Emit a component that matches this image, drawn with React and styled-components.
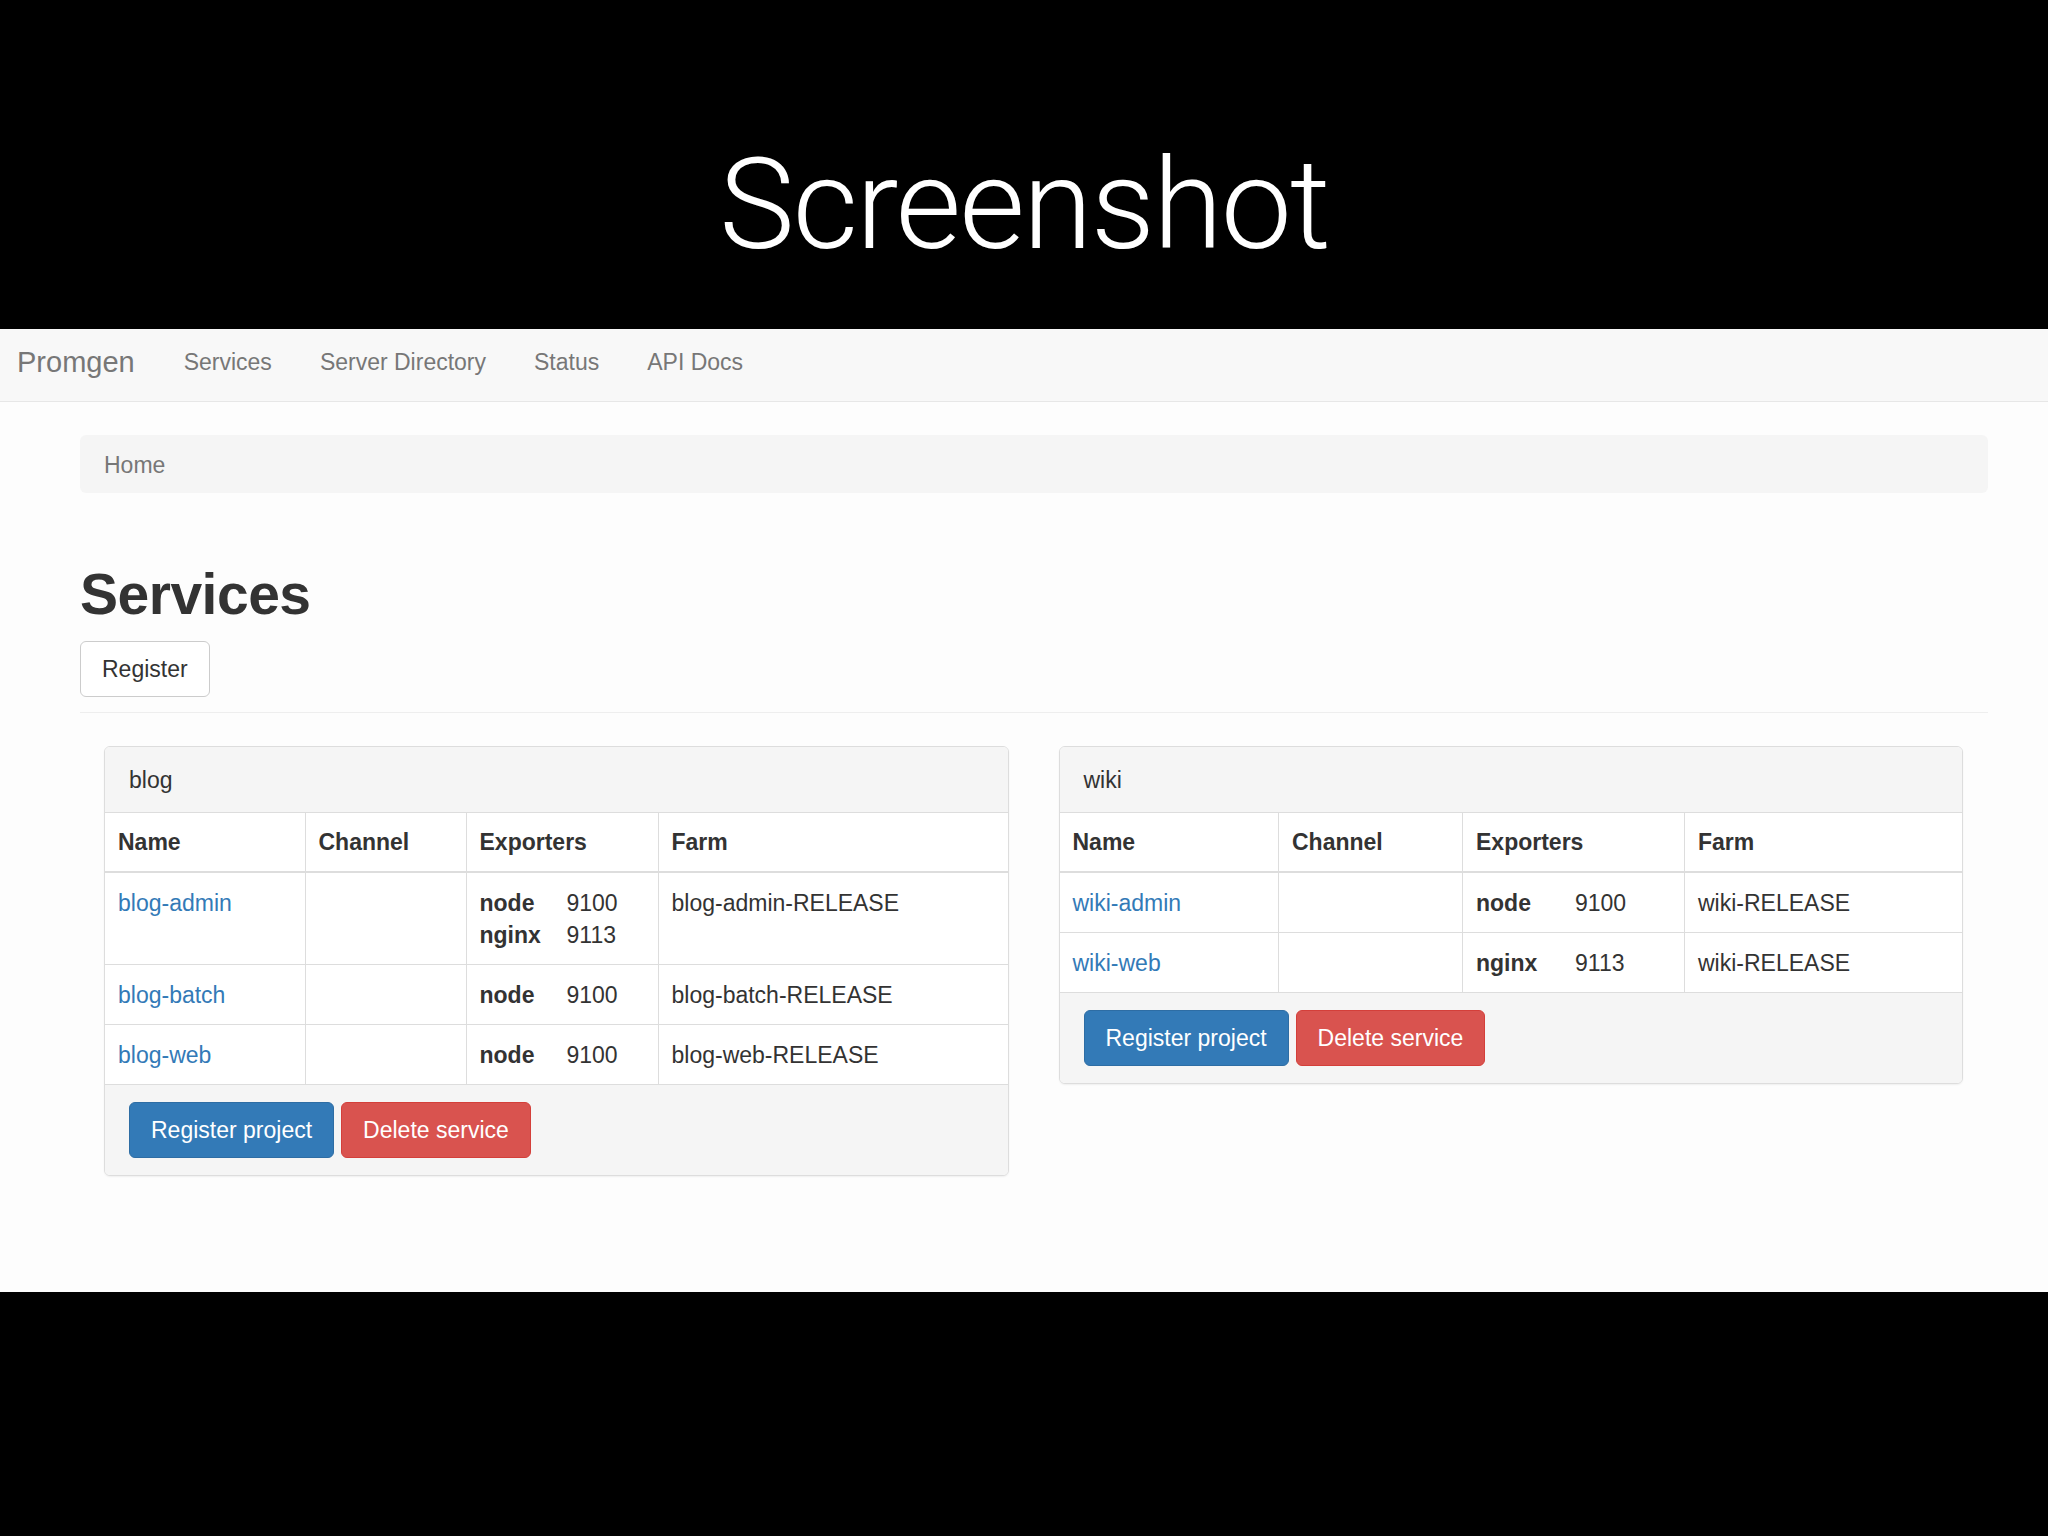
import styled, { createGlobalStyle } from 'styled-components';

const GlobalStyle = createGlobalStyle`
  html, body {
    margin: 0;
    padding: 0;
    background: #000;
  }
  * {
    box-sizing: border-box;
  }
`;

const Slide = styled.div`
  width: 2048px;
  height: 1536px;
  background: #000;
  display: flex;
  flex-direction: column;
  font-family: "Liberation Sans", Arial, sans-serif;
`;

const TitleBar = styled.div`
  height: 329px;
  padding-top: 141px;
  text-align: center;
`;

const Title = styled.h1`
  margin: 0;
  font-family: Roboto, "Liberation Sans", sans-serif;
  font-weight: 300;
  font-size: 127px;
  line-height: 1;
  color: #fff;
  letter-spacing: -2px;
`;

const Screen = styled.div`
  height: 963px;
  background: #fdfdfd;
  overflow: hidden;
  color: #333;
  font-size: 23px;
  line-height: 32px;
`;

const Navbar = styled.nav`
  height: 73px;
  background: #f8f8f8;
  border-bottom: 1px solid #e7e7e7;
  display: flex;
  align-items: center;
  gap: 48px;
  padding: 0 0 6px 17px;
`;

const Brand = styled.a`
  font-size: 29px;
  color: #777;
  margin-right: 1px;
`;

const NavLink = styled.a`
  color: #777;
  font-size: 23px;
`;

const Container = styled.div`
  padding: 0 60px 0 80px;
`;

const Breadcrumb = styled.div`
  margin-top: 33px;
  height: 58px;
  padding: 2px 24px 0;
  background: #f5f5f5;
  border-radius: 6px;
  display: flex;
  align-items: center;
  color: #777;
`;

const PageHeader = styled.div`
  margin-top: 70px;
  padding-bottom: 15px;
  border-bottom: 1px solid #eee;
`;

const Heading = styled.h1`
  margin: 0 0 15px;
  font-size: 57px;
  font-weight: bold;
  line-height: 1.1;
  color: #333;
  letter-spacing: -0.5px;
`;

const Button = styled.button`
  font-family: inherit;
  font-size: 23px;
  line-height: 32px;
  padding: 11px 21px;
  border-radius: 6px;
  border: 1px solid ${(p) => (p.$variant === 'primary' ? '#2e6da4' : p.$variant === 'danger' ? '#d43f3a' : '#ccc')};
  background: ${(p) => (p.$variant === 'primary' ? '#337ab7' : p.$variant === 'danger' ? '#d9534f' : '#fff')};
  color: ${(p) => (p.$variant ? '#fff' : '#333')};
  cursor: pointer;
`;

const PanelGrid = styled.div`
  margin-top: 33px;
  padding: 0 25px 0 24px;
  display: grid;
  grid-template-columns: 1fr 1fr;
  gap: 50px;
  align-items: start;
`;

const Panel = styled.div`
  background: #fff;
  border: 1px solid #ddd;
  border-radius: 6px;
  box-shadow: 0 1px 2px rgba(0, 0, 0, 0.06);
  overflow: hidden;
`;

const PanelHeading = styled.div`
  padding: 17px 24px 16px;
  background: #f5f5f5;
  border-bottom: 1px solid #ddd;
  color: #333;
`;

const Table = styled.table`
  width: 100%;
  border-collapse: collapse;
  table-layout: fixed;

  th, td {
    padding: 14px 12px 13px 13px;
    border: 1px solid #ddd;
    text-align: left;
    vertical-align: top;
    line-height: 32px;
  }
  th {
    padding-top: 13px;
    font-weight: bold;
    border-bottom-width: 2px;
    border-top: 0;
  }
  tr > :first-child {
    border-left: 0;
  }
  tr > :last-child {
    border-right: 0;
  }
  tbody tr:last-child td {
    border-bottom: 0;
  }
`;

const NameLink = styled.a`
  color: #337ab7;
  text-decoration: none;
`;

const Exporters = styled.div`
  display: grid;
  grid-template-columns: ${(p) => p.$labelWidth}px auto;
`;

const ExporterLabel = styled.span`
  font-weight: bold;
`;

const PanelFooter = styled.div`
  padding: 17px 24px 17px;
  background: #f5f5f5;
  border-top: 1px solid #ddd;
  display: flex;
  gap: 7px;
`;

const services = [
  {
    name: 'blog',
    cols: [200, 161, 192, 351],
    labelWidth: 87,
    projects: [
      { name: 'blog-admin', farm: 'blog-admin-RELEASE', exporters: [['node', '9100'], ['nginx', '9113']] },
      { name: 'blog-batch', farm: 'blog-batch-RELEASE', exporters: [['node', '9100']] },
      { name: 'blog-web', farm: 'blog-web-RELEASE', exporters: [['node', '9100']] },
    ],
  },
  {
    name: 'wiki',
    cols: [219, 184, 222, 280],
    labelWidth: 99,
    projects: [
      { name: 'wiki-admin', farm: 'wiki-RELEASE', exporters: [['node', '9100']] },
      { name: 'wiki-web', farm: 'wiki-RELEASE', exporters: [['nginx', '9113']] },
    ],
  },
];

function ServicePanel({ service }) {
  return (
    <Panel>
      <PanelHeading>{service.name}</PanelHeading>
      <Table>
        <colgroup>
          {service.cols.map((w, i) => (
            <col key={i} style={{ width: w }} />
          ))}
        </colgroup>
        <thead>
          <tr>
            <th>Name</th>
            <th>Channel</th>
            <th>Exporters</th>
            <th>Farm</th>
          </tr>
        </thead>
        <tbody>
          {service.projects.map((p) => (
            <tr key={p.name}>
              <td>
                <NameLink href="#">{p.name}</NameLink>
              </td>
              <td></td>
              <td>
                <Exporters $labelWidth={service.labelWidth}>
                  {p.exporters.map(([label, port]) => [
                    <ExporterLabel key={label}>{label}</ExporterLabel>,
                    <span key={label + port}>{port}</span>,
                  ])}
                </Exporters>
              </td>
              <td>{p.farm}</td>
            </tr>
          ))}
        </tbody>
      </Table>
      <PanelFooter>
        <Button $variant="primary">Register project</Button>
        <Button $variant="danger">Delete service</Button>
      </PanelFooter>
    </Panel>
  );
}

export default function App() {
  return (
    <>
      <GlobalStyle />
      <Slide>
        <TitleBar>
          <Title>Screenshot</Title>
        </TitleBar>
        <Screen>
          <Navbar>
            <Brand>Promgen</Brand>
            <NavLink>Services</NavLink>
            <NavLink>Server Directory</NavLink>
            <NavLink>Status</NavLink>
            <NavLink>API Docs</NavLink>
          </Navbar>
          <Container>
            <Breadcrumb>Home</Breadcrumb>
            <PageHeader>
              <Heading>Services</Heading>
              <Button>Register</Button>
            </PageHeader>
            <PanelGrid>
              {services.map((s) => (
                <ServicePanel key={s.name} service={s} />
              ))}
            </PanelGrid>
          </Container>
        </Screen>
      </Slide>
    </>
  );
}
